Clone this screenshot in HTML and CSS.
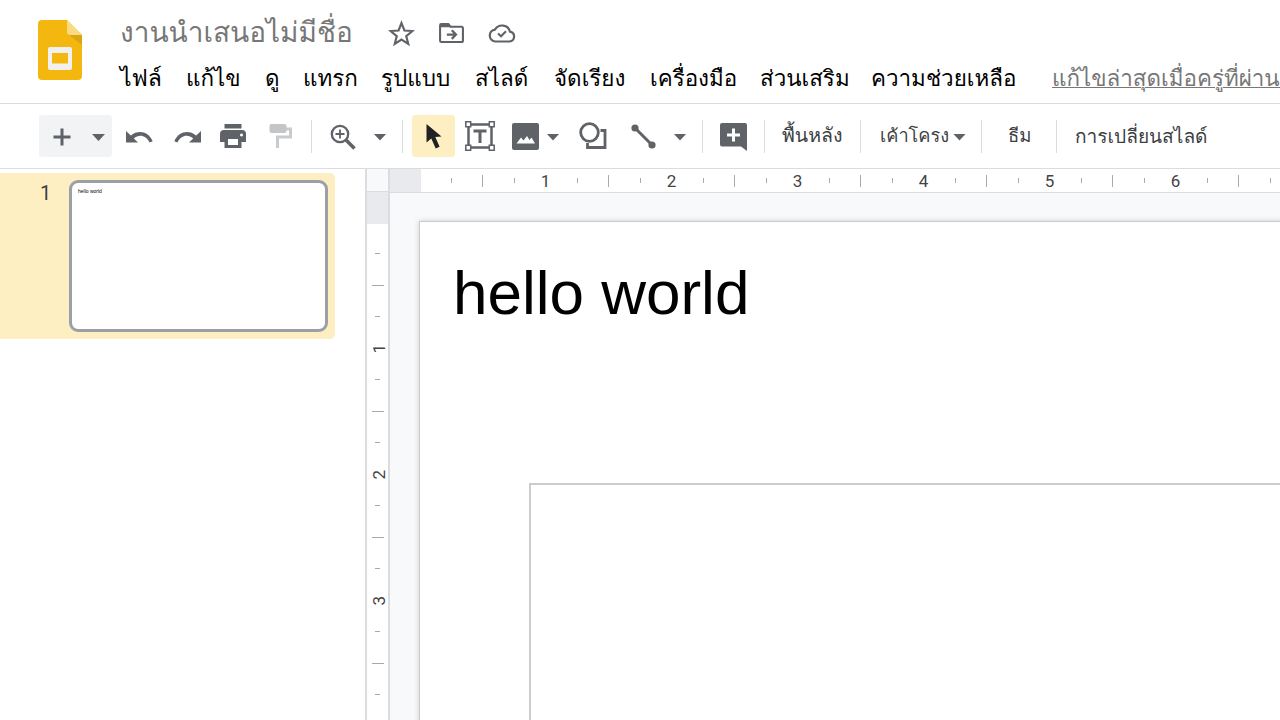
FILE: index.html
```html
<!DOCTYPE html>
<html lang="th">
<head>
<meta charset="utf-8">
<title>งานนำเสนอไม่มีชื่อ</title>
<link rel="stylesheet" href="styles.css">
</head>
<body>
<header class="header">
  <svg class="logo" viewBox="0 0 44 60">
    <path fill="#f4b70f" d="M4 0H29L44 15V56a4 4 0 0 1-4 4H4a4 4 0 0 1-4-4V4a4 4 0 0 1 4-4z"/>
    <path fill="#dda412" d="M30 14L44 25V15z"/>
    <path fill="#fadb80" d="M29 0L44 15H32a3 3 0 0 1-3-3z"/>
    <path fill="#f1f1f1" fill-rule="evenodd" d="M12 27H32a2 2 0 0 1 2 2V48a2 2 0 0 1-2 2H12a2 2 0 0 1-2-2V29a2 2 0 0 1 2-2zM14 33V43.500H30V33z"/>
  </svg>
  <div class="head-main">
    <div class="title-row">
      <span class="title">งานนำเสนอไม่มีชื่อ</span>
      <svg class="head-icon star" viewBox="0 0 24 24"><path fill="none" stroke="#5f6368" stroke-width="1.9" d="M12 2.700L14.600 9.300L21.700 9.800L16.200 14.300L18 21.200L12 17.400L6 21.200L7.800 14.300L2.300 9.800L9.400 9.300z"/></svg>
      <svg class="head-icon folder" viewBox="0 0 26 22"><path fill="none" stroke="#5f6368" stroke-width="2" d="M2 3.500V18a1.200 1.200 0 0 0 1.200 1.200H22.800A1.200 1.200 0 0 0 24 18V5.700a1.200 1.200 0 0 0-1.200-1.200H12L10 2H3.200A1.200 1.200 0 0 0 2 3.200z"/><path fill="#5f6368" d="M2 1.500H10L12.500 5H2z"/><path fill="none" stroke="#5f6368" stroke-width="2.200" d="M8.500 12H17M13.300 7.800L17.300 12L13.300 16.200"/></svg>
      <svg class="head-icon cloud" viewBox="0 0 28 20"><path fill="none" stroke="#5f6368" stroke-width="2.200" d="M7 18.500H21.500A5 5 0 0 0 22 8.600A8.200 8.200 0 0 0 7 6.600A6 6 0 0 0 7 18.500z"/><path fill="none" stroke="#5f6368" stroke-width="2" d="M10 10.500L13 13.300L18 8.200"/></svg>
    </div>
    <nav class="menu">
      <span class="m-file">ไฟล์</span><span>แก้ไข</span><span>ดู</span><span>แทรก</span><span>รูปแบบ</span><span>สไลด์</span><span>จัดเรียง</span><span>เครื่องมือ</span><span>ส่วนเสริม</span><span>ความช่วยเหลือ</span><span class="edited">แก้ไขล่าสุดเมื่อครู่ที่ผ่านมา</span>
    </nav>
  </div>
</header>
<div class="toolbar">
  <div class="new-btn">
    <svg width="18" height="18" viewBox="0 0 18 18"><path stroke="#5f6368" stroke-width="3" d="M9 .500V17.500M.500 9H17.500"/></svg>
    <i class="caret"></i>
  </div>
  <div class="tool undo"><svg width="27" height="12" viewBox="0 0 27 12"><path fill="#5f6368" d="M0 0V11.500H12L7.800 7.400C13 3 20 4 23.500 11.500L26.700 10.300C22.500 .500 12.500-1.500 4.800 4.500z"/></svg></div>
  <div class="tool redo"><svg width="27" height="12" viewBox="0 0 27 12"><path fill="#5f6368" d="M27 0V11.500H15L19.200 7.400C14 3 7 4 3.500 11.500L.300 10.300C4.500 .500 14.500-1.500 22.200 4.500z"/></svg></div>
  <div class="tool print"><svg width="26" height="24" viewBox="0 0 26 24"><path fill="#5f6368" fill-rule="evenodd" d="M4.500 0H21.500V4.500H4.500zM4 6H22a4 4 0 0 1 4 4V18H21.500V24H4.500V18H0V10a4 4 0 0 1 4-4zM8 15V21H18V15zM21.500 9.500a1.500 1.500 0 1 0 .01 0z"/></svg></div>
  <div class="tool paint"><svg width="24" height="24" viewBox="0 0 24 24"><path fill="#c4c5c6" d="M2.500 0H15.500a2 2 0 0 1 2 2V7a2 2 0 0 1-2 2H2.500a2 2 0 0 1-2-2V2a2 2 0 0 1 2-2z"/><path fill="none" stroke="#c9cacb" stroke-width="3" d="M17 5H21.500V13H8.500V24"/></svg></div>
  <i class="sep s1"></i>
  <div class="tool zoom"><svg width="26" height="26" viewBox="0 0 26 26"><circle cx="10" cy="10" r="8.200" fill="none" stroke="#5f6368" stroke-width="2.300"/><path stroke="#5f6368" stroke-width="1.800" d="M10 5.500V14.500M5.500 10H14.500"/><path stroke="#5f6368" stroke-width="3.500" d="M16 16L24.500 24.500"/></svg></div>
  <div class="tool c1"><i class="caret"></i></div>
  <i class="sep s2"></i>
  <div class="select"><svg width="16" height="25" viewBox="0 0 16 25"><path fill="#202124" d="M.500 0V18.500L5.300 14.500L9.700 24.500L13.600 22.800L9.300 13L15.500 12.500z"/></svg></div>
  <div class="tool textbox"><svg width="30" height="30" viewBox="0 0 30 30"><g fill="none" stroke="#5f6368"><path stroke-width="2.500" d="M3.500 3.500H26.500V26.500H3.500z"/><path stroke-width="3" d="M8.500 10H21.500M15 10V22"/></g><g fill="#fff" stroke="#5f6368" stroke-width="1.500"><path d="M.800 .800H5.700V5.700H.800zM24.300 .800H29.200V5.700H24.300zM.800 24.300H5.700V29.200H.800zM24.300 24.300H29.200V29.200H24.300z"/></g></svg></div>
  <div class="tool image"><svg width="27" height="27" viewBox="0 0 27 27"><rect width="27" height="27" rx="2" fill="#5f6368"/><path fill="#fff" d="M4.500 20.500L9 14.500L11.500 17.500L15 13L17.500 17L19.500 14.500L23 20.500z"/></svg></div>
  <div class="tool c2"><i class="caret"></i></div>
  <div class="tool shape"><svg width="28" height="28" viewBox="0 0 28 28"><g fill="none" stroke="#5f6368" stroke-width="2.800"><circle cx="10.500" cy="10.500" r="8.800"/><path d="M21.500 8.500H26V25.500H8.500V21"/></g></svg></div>
  <div class="tool line"><svg width="25" height="25" viewBox="0 0 25 25"><path stroke="#5f6368" stroke-width="3" d="M4 4L21 21"/><circle cx="4" cy="4" r="3.600" fill="#5f6368"/><circle cx="21" cy="21" r="3.600" fill="#5f6368"/></svg></div>
  <div class="tool c3"><i class="caret"></i></div>
  <i class="sep s3"></i>
  <div class="tool comment"><svg width="27" height="28" viewBox="0 0 27 28"><path fill="#5f6368" d="M2 0H25a2 2 0 0 1 2 2V28L21 23.500H2a2 2 0 0 1-2-2V2a2 2 0 0 1 2-2z"/><path stroke="#fff" stroke-width="3" d="M13.500 5.500V18.500M7 12H20"/></svg></div>
  <i class="sep"></i>
  <span class="label bg">พื้นหลัง</span>
  <i class="sep"></i>
  <span class="label layout">เค้าโครง</span><i class="caret layout-caret"></i>
  <i class="sep"></i>
  <span class="label theme">ธีม</span>
  <i class="sep"></i>
  <span class="label trans">การเปลี่ยนสไลด์</span>
</div>
<main class="workspace">
  <aside class="filmstrip">
    <div class="film-item"><span class="film-num">1</span><div class="thumb">hello world</div></div>
  </aside>
  <div class="vruler">
    <div class="corner"></div><div class="vmargin"></div>
    <div class="vticks"><b></b><b class="half"></b><b></b><em>1</em><b></b><b class="half"></b><b></b><em>2</em><b></b><b class="half"></b><b></b><em>3</em><b></b><b class="half"></b><b></b></div>
  </div>
  <section class="stage">
    <div class="hruler"><div class="hmargin"></div>
      <div class="hticks"><b></b><b class="half"></b><b></b><em>1</em><b></b><b class="half"></b><b></b><em>2</em><b></b><b class="half"></b><b></b><em>3</em><b></b><b class="half"></b><b></b><em>4</em><b></b><b class="half"></b><b></b><em>5</em><b></b><b class="half"></b><b></b><em>6</em><b></b><b class="half"></b><b></b></div>
    </div>
    <div class="canvas">
      <div class="slide"><div class="slide-title">hello world</div><div class="placeholder"></div></div>
    </div>
  </section>
</main>
</body>
</html>
```
FILE: styles.css
```css
* { box-sizing: border-box; }
body { margin: 0; width: 1280px; height: 720px; overflow: hidden; background: #fff; display: flex; flex-direction: column; font-family: Loma, "Noto Sans Thai Looped", "Noto Sans", sans-serif; color: #000; }
svg { display: block; flex: none; }
.header { height: 104px; flex: none; border-bottom: 1px solid #dadce0; display: flex; padding-left: 38px; }
.logo { width: 44px; height: 60px; margin: 20px 1px 0 0; }
.head-main { padding-left: 37px; flex: none; }
.title-row { height: 66px; display: flex; align-items: center; }
.title { font-size: 28px; color: #777; width: 268px; white-space: nowrap; line-height: 62px; padding-bottom: 2px; }
.star { width: 27px; height: 27px; }
.folder { width: 27px; height: 23px; margin-left: 23px; }
.cloud { width: 28px; height: 20px; margin-left: 23px; }
.menu { display: grid; grid-template-columns: 66px 79px 38px 78px 94px 79px 96px 110px 111px 181px auto; font-size: 22.400px; line-height: 25px; white-space: nowrap; }
.m-file { font-size: 23px; }
.edited { color: #777; text-decoration: underline; text-decoration-thickness: 1px; }
.toolbar { height: 65px; flex: none; border-bottom: 1px solid #dadce0; display: flex; align-items: center; padding-left: 39px; }
.new-btn { width: 73px; height: 42px; background: #f1f3f4; border-radius: 3px; display: flex; align-items: center; padding: 1px 0 0 14px; gap: 21px; }
.caret { flex: none; width: 13px; height: 7px; margin-top: 2px; background: #5f6368; clip-path: polygon(0 0, 100% 0, 50% 100%); }
.tool { flex: none; display: flex; align-items: center; justify-content: center; }
.undo { width: 55px; } .redo { width: 40px; } .print { width: 52px; } .paint { width: 44px; }
.undo, .redo, .zoom, .comment, .line { padding-top: 1px; }
.zoom { width: 62px; } .c1 { width: 12px; }
.textbox { width: 50px; } .image { width: 40px; } .c2 { width: 16px; } .shape { width: 64px; }
.line { width: 36px; } .c3 { width: 38px; } .comment { width: 61px; }
.sep { flex: none; width: 1px; height: 33px; background: #dadce0; }
.s1 { margin-left: 8px; } .s2 { margin-left: 16px; margin-right: 9px; } .s3 { margin-left: 3px; }
.select { flex: none; width: 43px; height: 42px; border-radius: 3px; background: #feefc3; display: flex; align-items: center; justify-content: center; }
.label { flex: none; font-size: 18.200px; line-height: 24px; color: #3c4043; white-space: nowrap; }
.bg { width: 95px; padding-left: 17px; font-size: 19.500px; }
.layout { width: 92px; padding-left: 19px; }
.layout-caret { margin-right: 15px; }
.theme { width: 74px; padding-left: 26px; font-size: 18.500px; }
.trans { padding-left: 18px; font-size: 19.100px; }
.workspace { flex: 1; min-height: 0; display: flex; }
.filmstrip { width: 365px; flex: none; padding-top: 4px; }
.film-item { width: 335px; height: 166px; background: #feefc3; border-radius: 0 5px 5px 0; display: flex; padding-top: 7px; }
.film-num { width: 69px; padding: 1px 0 0 40px; font: 20px/25px Roboto, sans-serif; color: #3c4043; }
.thumb { width: 259px; height: 152px; border: 3px solid #9aa0a6; border-radius: 9px; background: #fff; padding: 4px 6px; font: 5px/8px "Liberation Sans", sans-serif; }
.vruler { width: 25px; flex: none; border-left: 2px solid #dadce0; border-right: 2px solid #dadce0; display: flex; flex-direction: column; }
.corner { height: 23px; flex: none; background: #f8f9fa; border-bottom: 1px solid #dadce0; }
.vmargin { height: 32px; flex: none; background: #e8eaed; }
.vticks { padding-top: 14px; }
.vticks b, .vticks em { height: 31.500px; display: flex; align-items: center; justify-content: center; }
.vticks b::before { content: ""; width: 5px; height: 1px; background: #a8a8a8; }
.vticks .half::before { width: 12px; }
.vruler em, .hruler em { font: 17px Roboto, sans-serif; color: #444; }
.vticks em { transform: rotate(-90deg); padding-top: 2px; }
.stage { flex: 1; min-width: 0; display: flex; flex-direction: column; overflow: hidden; }
.hruler { height: 24px; flex: none; display: flex; border-bottom: 1px solid #dadce0; }
.hmargin { width: 31px; flex: none; background: #e8eaed; }
.hticks { display: flex; padding-left: 14.300px; }
.hticks b, .hticks em { flex: none; width: 31.510px; display: flex; align-items: center; justify-content: center; }
.hticks b::before { content: ""; width: 1px; height: 5px; background: #aaa; }
.hticks .half::before { height: 12px; }
.canvas { flex: 1; background: #f8f9fa; padding: 28px 0 0 29px; overflow: hidden; }
.slide { width: 1200px; height: 675px; background: #fff; border: 1px solid #ccc; box-shadow: 0 0 5px #ccc; padding: 36px 0 0 33px; }
.slide-title { font: 62px/70px "Liberation Sans", Arial, sans-serif; }
.placeholder { width: 1000px; height: 400px; margin: 155px 0 0 76px; border: 2px solid #ccc; }
```
